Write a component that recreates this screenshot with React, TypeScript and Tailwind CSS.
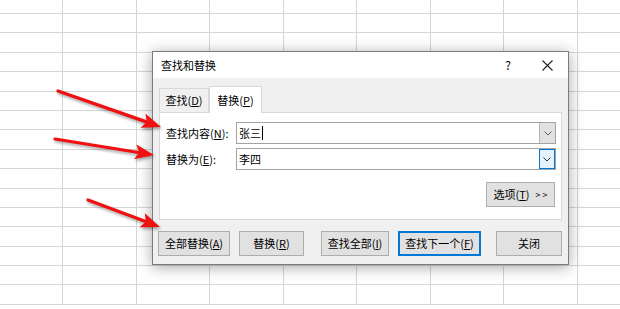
import React from "react";

const font = { fontFamily: '"Noto Sans CJK SC", "Noto Sans", sans-serif' };

const colWidths = [63, 73.5, 73.5, 73.5, 73.5, 73.5, 73.5, 73.5, 73.5];
const rowHeights = [14, ...Array.from({ length: 15 }, () => 19.4)];

type Arrow = { from: [number, number]; to: [number, number] };

const arrows: Arrow[] = [
  { from: [58, 91], to: [161, 127] },
  { from: [55, 139], to: [154, 155] },
  { from: [88, 200], to: [160, 227] },
];

function ArrowShape({ from, to }: Arrow) {
  const dx = to[0] - from[0];
  const dy = to[1] - from[1];
  const len = Math.hypot(dx, dy);
  const ux = dx / len;
  const uy = dy / len;
  const head = 19;
  const half = 7.5;
  const bx = to[0] - ux * head;
  const by = to[1] - uy * head;
  const pts = [
    `${to[0]},${to[1]}`,
    `${bx - uy * half},${by + ux * half}`,
    `${bx + ux * 4},${by + uy * 4}`,
    `${bx + uy * half},${by - ux * half}`,
  ].join(" ");
  return (
    <g>
      <line x1={from[0]} y1={from[1]} x2={bx + ux * 5} y2={by + uy * 5} stroke="#f01010" strokeWidth={3.2} strokeLinecap="round" />
      <polygon points={pts} fill="#f01010" />
    </g>
  );
}

function SheetGrid() {
  return (
    <div
      className="grid"
      style={{
        gridTemplateColumns: colWidths.map((w) => `${w}px`).join(" "),
        gridTemplateRows: rowHeights.map((h) => `${h}px`).join(" "),
      }}
    >
      {rowHeights.map((_, r) =>
        colWidths.map((_, c) => (
          <div key={`${r}-${c}`} className="border-r border-b border-[#d6d6d6] bg-white" />
        ))
      )}
    </div>
  );
}

function Chevron({ color = "#606060" }: { color?: string }) {
  return (
    <svg width="8" height="5" viewBox="0 0 8 5">
      <path d="M0.5 0.5 L4 4 L7.5 0.5" fill="none" stroke={color} strokeWidth="1" />
    </svg>
  );
}

function Combo({ value, active, caret }: { value: string; active?: boolean; caret?: boolean }) {
  return (
    <div className="flex h-[22px] flex-1 items-stretch border border-[#a3a3a3] bg-white">
      <div className="flex flex-1 items-center pl-[2px] text-[11px] text-black">
        {value}
        {caret && <span className="ml-[1px] inline-block h-[14px] w-px bg-black" />}
      </div>
      {active ? (
        <div className="flex w-[16px] items-center justify-center border border-[#0078d7] bg-[#e5f1fb]">
          <Chevron color="#303030" />
        </div>
      ) : (
        <div className="flex w-[16px] items-center justify-center border-l border-[#b5b5b5] bg-[#e1e1e1]">
          <Chevron />
        </div>
      )}
    </div>
  );
}

function Btn({ children, className = "", focus }: { children: React.ReactNode; className?: string; focus?: boolean }) {
  return (
    <div
      className={`flex h-[25px] items-center justify-center bg-[#e1e1e1] text-[11px] text-black ${
        focus ? "border-2 border-[#0078d7]" : "border border-[#adadad]"
      } ${className}`}
    >
      {children}
    </div>
  );
}

export default function App() {
  return (
    <div className="relative h-[309px] w-[620px] overflow-hidden bg-white" style={font}>
      <SheetGrid />

      <div className="absolute left-[152px] top-[51px] flex h-[214px] w-[417px] flex-col border border-[#7c7c7c] bg-[#f0f0f0] shadow-[0_2px_14px_rgba(0,0,0,0.35)]">
        <div className="flex h-[26px] items-center bg-white pl-[8px] text-[11px] text-black">
          <span>查找和替换</span>
          <span className="ml-auto mr-[31px] text-[12px]">?</span>
          <svg className="mr-[15px]" width="11" height="11" viewBox="0 0 11 11">
            <path d="M0.5 0.5 L10.5 10.5 M10.5 0.5 L0.5 10.5" stroke="#222" strokeWidth="1.1" />
          </svg>
        </div>

        <div className="flex flex-col px-[6px] pt-[8px]">
          <div className="flex items-end text-[11px] text-black">
            <div className="flex h-[24px] w-[50px] items-center justify-center border border-b-0 border-[#d9d9d9] bg-[#f0f0f0]">
              查找(<u>D</u>)
            </div>
            <div className="relative z-10 -mb-px flex h-[27px] w-[53px] items-center justify-center border border-b-0 border-[#d9d9d9] bg-white">
              替换(<u>P</u>)
            </div>
          </div>

          <div className="flex h-[108px] flex-col border border-[#d9d9d9] bg-white pl-[6px] pr-[5px] pt-[9px]">
            <div className="flex items-center text-[11px] text-black">
              <span className="w-[70px]">
                查找内容(<u>N</u>):
              </span>
              <Combo value="张三" caret />
            </div>
            <div className="mt-[4px] flex items-center text-[11px] text-black">
              <span className="w-[70px]">
                替换为(<u>E</u>):
              </span>
              <Combo value="李四" active />
            </div>
            <div className="mt-[12px] flex justify-end pr-[1px]">
              <Btn className="w-[69px] gap-[6px]">
                <span>
                  选项(<u>T</u>)
                </span>
                <span className="text-[9px]">&gt; &gt;</span>
              </Btn>
            </div>
          </div>
        </div>

        <div className="mt-[11px] flex pl-[5px]">
          <Btn className="w-[72px]">
            全部替换(<u>A</u>)
          </Btn>
          <Btn className="ml-[9px] w-[65px]">
            替换(<u>R</u>)
          </Btn>
          <Btn className="ml-[17px] w-[68px]">
            查找全部(<u>I</u>)
          </Btn>
          <Btn className="ml-[9px] w-[83px]" focus>
            查找下一个(<u>F</u>)
          </Btn>
          <Btn className="ml-[15px] w-[66px]">关闭</Btn>
        </div>
      </div>

      <svg
        className="pointer-events-none absolute left-0 top-0 [filter:drop-shadow(1px_2px_1.5px_rgba(0,0,0,0.35))]"
        width="620"
        height="309"
        viewBox="0 0 620 309"
      >
        {arrows.map((a, i) => (
          <ArrowShape key={i} {...a} />
        ))}
      </svg>
    </div>
  );
}
